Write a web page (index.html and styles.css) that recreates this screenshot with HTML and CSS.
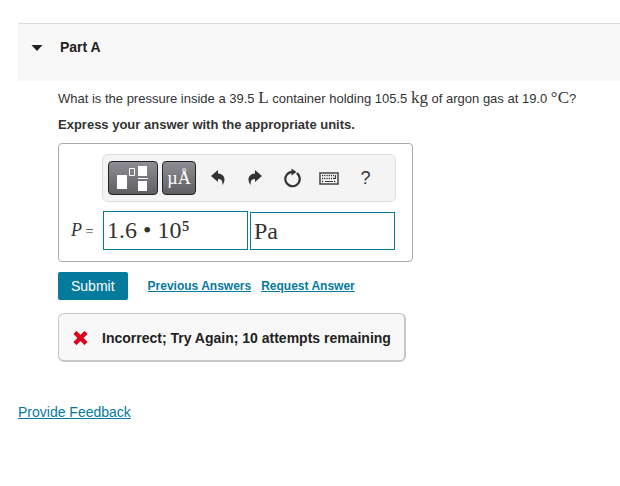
FILE: index.html
```html
<!DOCTYPE html>
<html lang="en">
<head>
    <meta charset="utf-8">
    <title>Part A</title>
    <link rel="stylesheet" href="styles.css">
</head>
<body>

<section class="part">
    <header class="part-header">
        <button class="toggle-button" type="button" aria-label="Collapse Part A" aria-expanded="true">
            <svg width="12" height="6" viewBox="0 0 12 6"><path d="M0.5 0h11L6 6z" fill="#222"/></svg>
        </button>
        <h2>Part A</h2>
    </header>

    <div class="part-body">
        <p class="question">What is the pressure inside a 39.5 <span class="unit">L</span> container holding 105.5 <span class="unit">kg</span> of argon gas at 19.0 <span class="unit">°C</span>?</p>
        <p class="instructions">Express your answer with the appropriate units.</p>

        <form id="answerForm">
            <div class="answer-box">
                <div class="toolbar">
                    <button class="tool-button templates-button" type="button" aria-label="Templates">
                        <svg width="32" height="25" viewBox="0 0 32 25">
                            <path d="M0 9h10v14H0zM21 0h9v10h-9zM21 15h9v10h-9zM21 12h10v1H21z" fill="#fff"/>
                            <path d="M12.500 2.500h5v7h-5z" fill="none" stroke="#fff"/>
                        </svg>
                    </button>
                    <button class="tool-button symbols-button" type="button" aria-label="Units">µÅ</button>
                    <button class="icon-button" type="button" aria-label="Undo">
                        <svg width="14" height="16" viewBox="0 0 14 16"><path d="M0 6L7 0v3.500c5 .3 7.200 4 6.300 7.500-.3 1.600-1 3-2.100 4 .7-4-.5-6-4.200-6v3z" fill="#333"/></svg>
                    </button>
                    <button class="icon-button" type="button" aria-label="Redo">
                        <svg width="14" height="16" viewBox="0 0 14 16"><path d="M14 6L7 0v3.500C2 3.800-.2 7.500.7 11c.3 1.600 1 3 2.100 4-.7-4 .5-6 4.200-6v3z" fill="#333"/></svg>
                    </button>
                    <button class="icon-button" type="button" aria-label="Reset">
                        <svg width="18" height="20" viewBox="0 0 18 20">
                            <path d="M13.800 5.200A7.200 7.200 0 1 1 9.500 3.800" fill="none" stroke="#333" stroke-width="2.200"/>
                            <path d="M8.500 0.500L13.500 4 8.500 7.500z" fill="#333"/>
                        </svg>
                    </button>
                    <button class="icon-button" type="button" aria-label="Keyboard shortcuts">
                        <svg width="20" height="13" viewBox="0 0 20 13">
                            <path d="M1 1h18v11H1z" fill="#fff" stroke="#444" stroke-width="1.500"/>
                            <path d="M3 3.500h12M3 6.500h12M3 9.500h2M15 9.500h2" stroke="#333" stroke-width="1.400" stroke-dasharray="1.300 0.900"/>
                            <path d="M14 6.500h2.500V3M6 9.500h8" fill="none" stroke="#333" stroke-width="1.200"/>
                        </svg>
                    </button>
                    <button class="icon-button help-button" type="button" aria-label="Help">?</button>
                </div>

                <div class="answer-row">
                    <label class="answer-label" for="valueInput"><i>P</i> =</label>
                    <input type="text" id="valueInput" class="value-input" name="value" value="1.6 • 10⁵">
                    <input type="text" id="unitsInput" class="units-input" name="units" value="Pa" aria-label="Units">
                </div>
            </div>

            <div class="actions">
                <button class="submit-button" type="submit">Submit</button>
                <a href="#">Previous Answers</a>
                <a href="#">Request Answer</a>
            </div>
        </form>

        <div class="feedback" role="status">
            <svg width="15" height="14" viewBox="0 0 15 14"><path d="M3.500 3l8 8M11.500 3l-8 8" stroke="#e0001b" stroke-width="4.400" stroke-linecap="square"/></svg>
            <span>Incorrect; Try Again; 10 attempts remaining</span>
        </div>
    </div>
</section>

<footer class="page-footer">
    <a href="#">Provide Feedback</a>
</footer>

</body>
</html>
```

FILE: styles.css
```css
* {
    box-sizing: border-box;
}

body {
    font-family: "Liberation Sans", Arial, sans-serif;
    font-size: 13px;
    line-height: 16px;
    color: #333;
    background-color: #fff;
    margin: 0;
    padding: 23px 0 0 18px;
}

a {
    color: #047a9c;
}

button {
    font-family: inherit;
    cursor: pointer;
}

svg {
    display: block;
}

.part-header {
    display: flex;
    align-items: center;
    gap: 17px;
    background-color: #f8f8f8;
    border-top: 1px solid #ddd;
    padding: 15px 13px 25px;
}

.part-header h2 {
    margin: 0;
    font-size: 14px;
    line-height: 17px;
    color: #222;
}

.toggle-button {
    background: none;
    border: none;
    padding: 0;
}

.part-body {
    padding-left: 40px;
}

.question {
    margin: 7px 0 8px;
    line-height: 20px;
}

.unit {
    font-family: "Liberation Serif", "Times New Roman", serif;
    font-size: 17px;
}

.instructions {
    margin: 0 0 10px;
    font-weight: bold;
}

.answer-box {
    width: fit-content;
    border: 1px solid #aaa;
    border-radius: 4px;
    padding: 10px 17px 11px 12px;
}

/* Equation toolbar */
.toolbar {
    display: flex;
    align-items: center;
    height: 48px;
    margin: 0 -1px 0 31px;
    padding: 0 5px;
    background-color: #f4f4f4;
    border: 1px solid #ddd;
    border-radius: 6px;
}

.tool-button {
    display: flex;
    align-items: center;
    justify-content: center;
    height: 34px;
    padding: 0;
    color: #fff;
    background-image: linear-gradient(#8d8d94, #606063);
    border: 1px solid #222;
    border-radius: 4px;
}

.templates-button {
    width: 50px;
    margin-right: 4px;
}

.symbols-button {
    width: 34px;
    margin-right: 3px;
    font-family: "Liberation Serif", "Times New Roman", serif;
    font-size: 18px;
}

.icon-button {
    display: flex;
    align-items: center;
    justify-content: center;
    width: 37px;
    height: 34px;
    padding: 0;
    color: #333;
    background: none;
    border: none;
}

.help-button {
    font-size: 18px;
}

/* Answer fields */
.answer-row {
    display: flex;
    align-items: flex-end;
    gap: 2px;
    margin-top: 9px;
}

.answer-label {
    width: 30px;
    align-self: center;
    font-family: "Liberation Serif", "Times New Roman", serif;
    font-size: 14px;
    white-space: nowrap;
}

.answer-label i {
    font-size: 18px;
}

.value-input,
.units-input {
    width: 145px;
    height: 38px;
    padding: 0 3px;
    font-family: "Liberation Serif", "Times New Roman", serif;
    font-size: 24px;
    color: #333;
    background-color: #fff;
    border: 1px solid #047a9c;
}

.value-input {
    height: 39px;
}

/* Submit row */
.actions {
    display: flex;
    align-items: center;
    gap: 10px;
    margin-top: 10px;
    font-size: 12px;
    font-weight: bold;
}

.submit-button {
    height: 28px;
    margin-right: 10px;
    padding: 0 13px;
    font-size: 14px;
    color: #fff;
    background-color: #047a9c;
    border: none;
    border-radius: 2px;
}

.feedback {
    display: flex;
    align-items: center;
    gap: 14px;
    width: fit-content;
    margin-top: 13px;
    padding: 16px 13px 14px 14px;
    font-size: 14px;
    font-weight: bold;
    color: #222;
    background-color: #f8f8f8;
    border: 1px solid #c7c7c7;
    border-right-width: 2px;
    border-bottom-width: 2px;
    border-radius: 6px;
}

.page-footer {
    margin-top: 42px;
    font-size: 14px;
}
```
